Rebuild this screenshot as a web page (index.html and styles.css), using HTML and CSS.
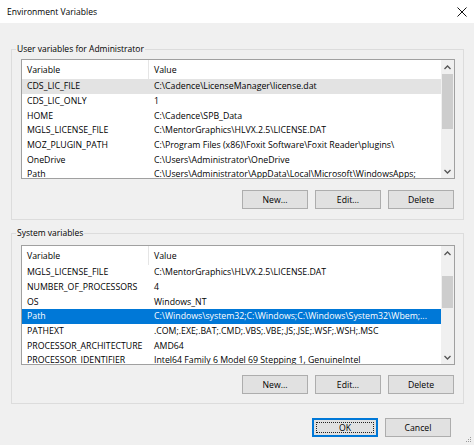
FILE: index.html
```html
<!DOCTYPE html>
<html>
<head>
<meta charset="utf-8">
<link rel="stylesheet" href="styles.css">
</head>
<body>
<div class="window">
  <div class="titlebar">
    <span class="title">Environment Variables</span>
    <svg class="close" width="10" height="10" viewBox="0 0 10 10"><path d="M0.5 0.5 L9.5 9.5 M9.5 0.5 L0.5 9.5" stroke="#111" stroke-width="1" fill="none"/></svg>
  </div>
  <div class="client">
    <fieldset class="group g1">
      <legend>User variables for Administrator</legend>
      <div class="listview">
        <div class="lv-main">
          <div class="lv-header"><div class="c1">Variable</div><div class="c2">Value</div></div>
          <div class="lv-row sel-inactive"><div class="c1">CDS_LIC_FILE</div><div class="c2">C:\Cadence\LicenseManager\license.dat</div></div>
          <div class="lv-row"><div class="c1">CDS_LIC_ONLY</div><div class="c2">1</div></div>
          <div class="lv-row"><div class="c1">HOME</div><div class="c2">C:\Cadence\SPB_Data</div></div>
          <div class="lv-row"><div class="c1">MGLS_LICENSE_FILE</div><div class="c2">C:\MentorGraphics\HLVX.2.5\LICENSE.DAT</div></div>
          <div class="lv-row"><div class="c1">MOZ_PLUGIN_PATH</div><div class="c2">C:\Program Files (x86)\Foxit Software\Foxit Reader\plugins\</div></div>
          <div class="lv-row"><div class="c1">OneDrive</div><div class="c2">C:\Users\Administrator\OneDrive</div></div>
          <div class="lv-row"><div class="c1">Path</div><div class="c2">C:\Users\Administrator\AppData\Local\Microsoft\WindowsApps;</div></div>
        </div>
        <div class="vscroll">
          <div class="sb-btn"><svg width="7" height="5" viewBox="0 0 7 5"><path d="M0.5 4 L3.5 1 L6.5 4" stroke="#555" stroke-width="1.3" fill="none"/></svg></div>
          <div class="sb-track"><div class="sb-thumb thumb-user"></div></div>
          <div class="sb-btn"><svg width="7" height="5" viewBox="0 0 7 5"><path d="M0.5 1 L3.5 4 L6.5 1" stroke="#555" stroke-width="1.3" fill="none"/></svg></div>
        </div>
      </div>
      <div class="btnrow">
        <button class="btn">New...</button>
        <button class="btn">Edit...</button>
        <button class="btn">Delete</button>
      </div>
    </fieldset>

    <fieldset class="group g2">
      <legend>System variables</legend>
      <div class="listview">
        <div class="lv-main">
          <div class="lv-header"><div class="c1">Variable</div><div class="c2">Value</div></div>
          <div class="lv-row"><div class="c1">MGLS_LICENSE_FILE</div><div class="c2">C:\MentorGraphics\HLVX.2.5\LICENSE.DAT</div></div>
          <div class="lv-row"><div class="c1">NUMBER_OF_PROCESSORS</div><div class="c2">4</div></div>
          <div class="lv-row"><div class="c1">OS</div><div class="c2">Windows_NT</div></div>
          <div class="lv-row sel-active"><div class="c1">Path</div><div class="c2">C:\Windows\system32;C:\Windows;C:\Windows\System32\Wbem;...</div></div>
          <div class="lv-row"><div class="c1">PATHEXT</div><div class="c2">.COM;.EXE;.BAT;.CMD;.VBS;.VBE;.JS;.JSE;.WSF;.WSH;.MSC</div></div>
          <div class="lv-row"><div class="c1">PROCESSOR_ARCHITECTURE</div><div class="c2">AMD64</div></div>
          <div class="lv-row"><div class="c1">PROCESSOR_IDENTIFIER</div><div class="c2">Intel64 Family 6 Model 69 Stepping 1, GenuineIntel</div></div>
        </div>
        <div class="vscroll">
          <div class="sb-btn"><svg width="7" height="5" viewBox="0 0 7 5"><path d="M0.5 4 L3.5 1 L6.5 4" stroke="#555" stroke-width="1.3" fill="none"/></svg></div>
          <div class="sb-track"><div class="sb-thumb thumb-system"></div></div>
          <div class="sb-btn"><svg width="7" height="5" viewBox="0 0 7 5"><path d="M0.5 1 L3.5 4 L6.5 1" stroke="#555" stroke-width="1.3" fill="none"/></svg></div>
        </div>
      </div>
      <div class="btnrow">
        <button class="btn">New...</button>
        <button class="btn">Edit...</button>
        <button class="btn">Delete</button>
      </div>
    </fieldset>

    <div class="dlg-buttons">
      <button class="btn btn-default"><span class="focus-rect">OK</span></button>
      <button class="btn">Cancel</button>
    </div>
    <svg class="grip" width="7" height="7" viewBox="0 0 7 7"><rect x="5" y="1" width="1" height="1" fill="#9a9a9a"/><rect x="3" y="3" width="1" height="1" fill="#9a9a9a"/><rect x="5" y="3" width="1" height="1" fill="#9a9a9a"/><rect x="1" y="5" width="1" height="1" fill="#9a9a9a"/><rect x="3" y="5" width="1" height="1" fill="#9a9a9a"/><rect x="5" y="5" width="1" height="1" fill="#9a9a9a"/></svg>
  </div>
</div>
</body>
</html>
```

FILE: styles.css
```css
* { box-sizing: border-box; }
html, body { margin: 0; padding: 0; background: #ffffff; }
body {
  font-family: "Open Sans", "Noto Sans", "DejaVu Sans", sans-serif;
  font-size: 8.75px;
  color: #000000;
  width: 474px;
  height: 448px;
  overflow: hidden;
}
.window { width: 474px; }
.titlebar {
  height: 23px;
  background: #ffffff;
  display: flex;
  align-items: center;
  justify-content: space-between;
  padding: 0 7px 0 7px;
}
.title { font-size: 8.55px; color: #000; }
.close { display: block; }

.client {
  position: relative;
  background: #f0f0f0;
  height: 422px;
  padding: 19px 10px 8px 11px;
}
.group {
  margin: 0;
  border: 1px solid #dcdcdc;
  padding: 3px 8px 10px 9px;
  min-width: 0;
}
.g2 { margin-top: 6px; padding-top: 5px; padding-bottom: 9px; }
.group legend {
  line-height: 14px;
  padding: 0 1px;
  margin-left: -5px;
  font-size: 8.5px;
  color: #000;
}
.listview {
  height: 120px;
  border: 1px solid #a0a0a0;
  background: #ffffff;
  display: flex;
  overflow: hidden;
}
.lv-main { flex: 1; min-width: 0; overflow: hidden; }
.lv-header {
  height: 19px;
  display: flex;
  align-items: center;
}
.lv-header .c1 { border-right: 1px solid #e5e5e5; height: 19px; display: flex; align-items: center; }
.lv-row {
  height: 14.67px;
  display: flex;
  align-items: center;
  white-space: nowrap;
}
.c1 { width: 127px; flex: none; padding-left: 5px; overflow: hidden; white-space: nowrap; }
.c2 { flex: 1; min-width: 0; padding-left: 5px; overflow: hidden; white-space: nowrap; }
.sel-inactive { background: #e3e3e3; }
.sel-active { background: #0078d7; color: #ffffff; }

.vscroll {
  width: 13px;
  flex: none;
  background: #f0f0f0;
  display: flex;
  flex-direction: column;
}
.sb-btn {
  height: 14px;
  flex: none;
  display: flex;
  align-items: center;
  justify-content: center;
}
.sb-btn svg { display: block; }
.sb-track { flex: 1; }
.sb-thumb { background: #cdcdcd; margin: 0 1px; }
.thumb-user { height: 55px; margin-top: 0; }
.thumb-system { height: 32px; margin-top: 16px; }

.btnrow {
  display: flex;
  justify-content: flex-end;
  gap: 7px;
  margin-top: 11px;
  padding-right: 1px;
}
.g2 .btnrow { margin-top: 10px; }
.btn {
  width: 66px;
  height: 19px;
  margin: 0;
  padding: 0;
  background: #e1e1e1;
  border: 1px solid #adadad;
  border-radius: 0;
  font-family: inherit;
  font-size: 8.7px;
  color: #000;
  display: flex;
  align-items: center;
  justify-content: center;
}
.dlg-buttons {
  display: flex;
  justify-content: flex-end;
  gap: 7px;
  margin-top: 14px;
  padding-right: 13px;
}
.btn-default {
  border: 1px solid #0078d7;
  box-shadow: inset 0 0 0 1px #0078d7;
  padding: 3px;
}
.focus-rect {
  width: 100%;
  height: 100%;
  border: 1px dotted #222;
  display: flex;
  align-items: center;
  justify-content: center;
}
.grip { position: absolute; right: 2px; bottom: 2px; }
```
